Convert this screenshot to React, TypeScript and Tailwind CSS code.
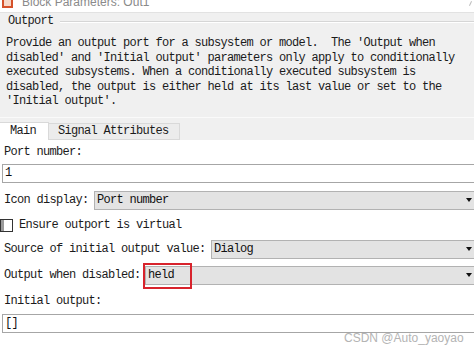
import { ReactNode } from "react";

const MONO = "font-['Liberation_Mono','DejaVu_Sans_Mono',monospace] text-[12px] tracking-[-0.7px]";

const DESCRIPTION = [
  "Provide an output port for a subsystem or model.  The 'Output when",
  "disabled' and 'Initial output' parameters only apply to conditionally",
  "executed subsystems. When a conditionally executed subsystem is",
  "disabled, the output is either held at its last value or set to the",
  "'Initial output'.",
];

function Select({ value, children }: { value: string; children?: ReactNode }) {
  return (
    <div className="relative -mr-[4px] flex h-[19px] flex-1 items-center border border-[#b2b2b2] bg-[#e3e3e3] pl-[2px]">
      <span className="whitespace-pre text-[#111]">{value}</span>
      <span className="ml-auto mr-[5px] h-0 w-0 border-x-[3px] border-t-[4px] border-x-transparent border-t-[#111]" />
      {children}
    </div>
  );
}

function TextField({ value }: { value: string }) {
  return (
    <div className="-mr-[4px] ml-[2px] flex h-[19px] items-center border border-r-0 border-[#a6a6a6] bg-white pl-[2px]">
      <span className="text-[#111]">{value}</span>
    </div>
  );
}

export default function App() {
  return (
    <div className={`relative h-[352px] w-[474px] overflow-hidden bg-white text-[#1b1b1b] ${MONO}`}>
      {/* window title, mostly scrolled off the top */}
      <div className="flex h-[13px] items-start gap-[9px] overflow-hidden border-b border-[#e2e2e2] pl-[2px]">
        <div className="h-[8px] w-[11px] shrink-0 border-2 border-t-0 border-[#d5512a] bg-[#f6d7c7]" />
        <span className="-mt-[4px] whitespace-pre font-['Liberation_Sans',Arial,sans-serif] text-[12px] leading-[12px] tracking-normal text-[#8a8a8a]">
          Block Parameters: Out1
        </span>
        <span className="ml-auto mr-[3px] mt-[1px] h-[5px] w-[1px] rotate-[25deg] bg-[#bdbdbd]" />
      </div>

      {/* description group */}
      <div className="bg-[#f0f0f0] pb-[8px] pt-[1px]">
        <div className="flex h-[15px] items-center">
          <span className="pl-[8px] pr-[6px] leading-[15px]">Outport</span>
          <div className="flex-1 border-t border-b border-t-[#d6d6d6] border-b-white" />
        </div>
        <div className="mt-[7px] pl-[6px] leading-[14.5px]">
          {DESCRIPTION.map((line, i) => (
            <div key={i} className="whitespace-pre">
              {line}
            </div>
          ))}
        </div>
      </div>

      {/* tabs */}
      <div className="flex h-[23px] items-end border-t border-[#fafafa] bg-[#f0f0f0]">
        <div className="flex h-[18px] w-[49px] items-center border-r border-t border-[#d9d9d9] bg-white pl-[10px]">
          Main
        </div>
        <div className="flex h-[17px] w-[131px] items-center border-b border-r border-t border-[#d9d9d9] bg-[#ececec] pl-[9px]">
          Signal Attributes
        </div>
      </div>

      {/* main tab content */}
      <div className="flex flex-col pt-[5px]">
        <div className="h-[15px] pl-[4px] leading-[15px]">Port number:</div>
        <div className="mt-[4px]">
          <TextField value="1" />
        </div>

        <div className="mt-[8px] flex items-center pl-[4px]">
          <span className="w-[90px] whitespace-pre">Icon display:</span>
          <Select value="Port number" />
        </div>

        <div className="mt-[9px] flex h-[13px] items-center">
          <div className="h-[13px] w-[13px] shrink-0 border border-[#333] bg-white shadow-[inset_3px_0_0_#9a9a9a]" />
          <span className="ml-[6px] whitespace-pre">Ensure outport is virtual</span>
        </div>

        <div className="mt-[8px] flex items-center pl-[4px]">
          <span className="w-[207px] whitespace-pre">Source of initial output value:</span>
          <Select value="Dialog" />
        </div>

        <div className="mt-[7px] flex items-center pl-[4px]">
          <span className="w-[141px] whitespace-pre">Output when disabled:</span>
          <Select value="held">
            <div className="absolute -left-[3px] -top-[4px] h-[26px] w-[49px] border-2 border-[#d8232c]" />
          </Select>
        </div>

        <div className="mt-[9px] h-[15px] pl-[4px] leading-[15px]">Initial output:</div>
        <div className="mt-[5px]">
          <TextField value="[]" />
        </div>
      </div>

      <div className="absolute left-[344px] top-[331px] whitespace-pre font-['Liberation_Sans',Arial,sans-serif] text-[12px] leading-[14px] tracking-normal text-[#b4b4b4]">
        CSDN @Auto_yaoyao
      </div>
    </div>
  );
}
